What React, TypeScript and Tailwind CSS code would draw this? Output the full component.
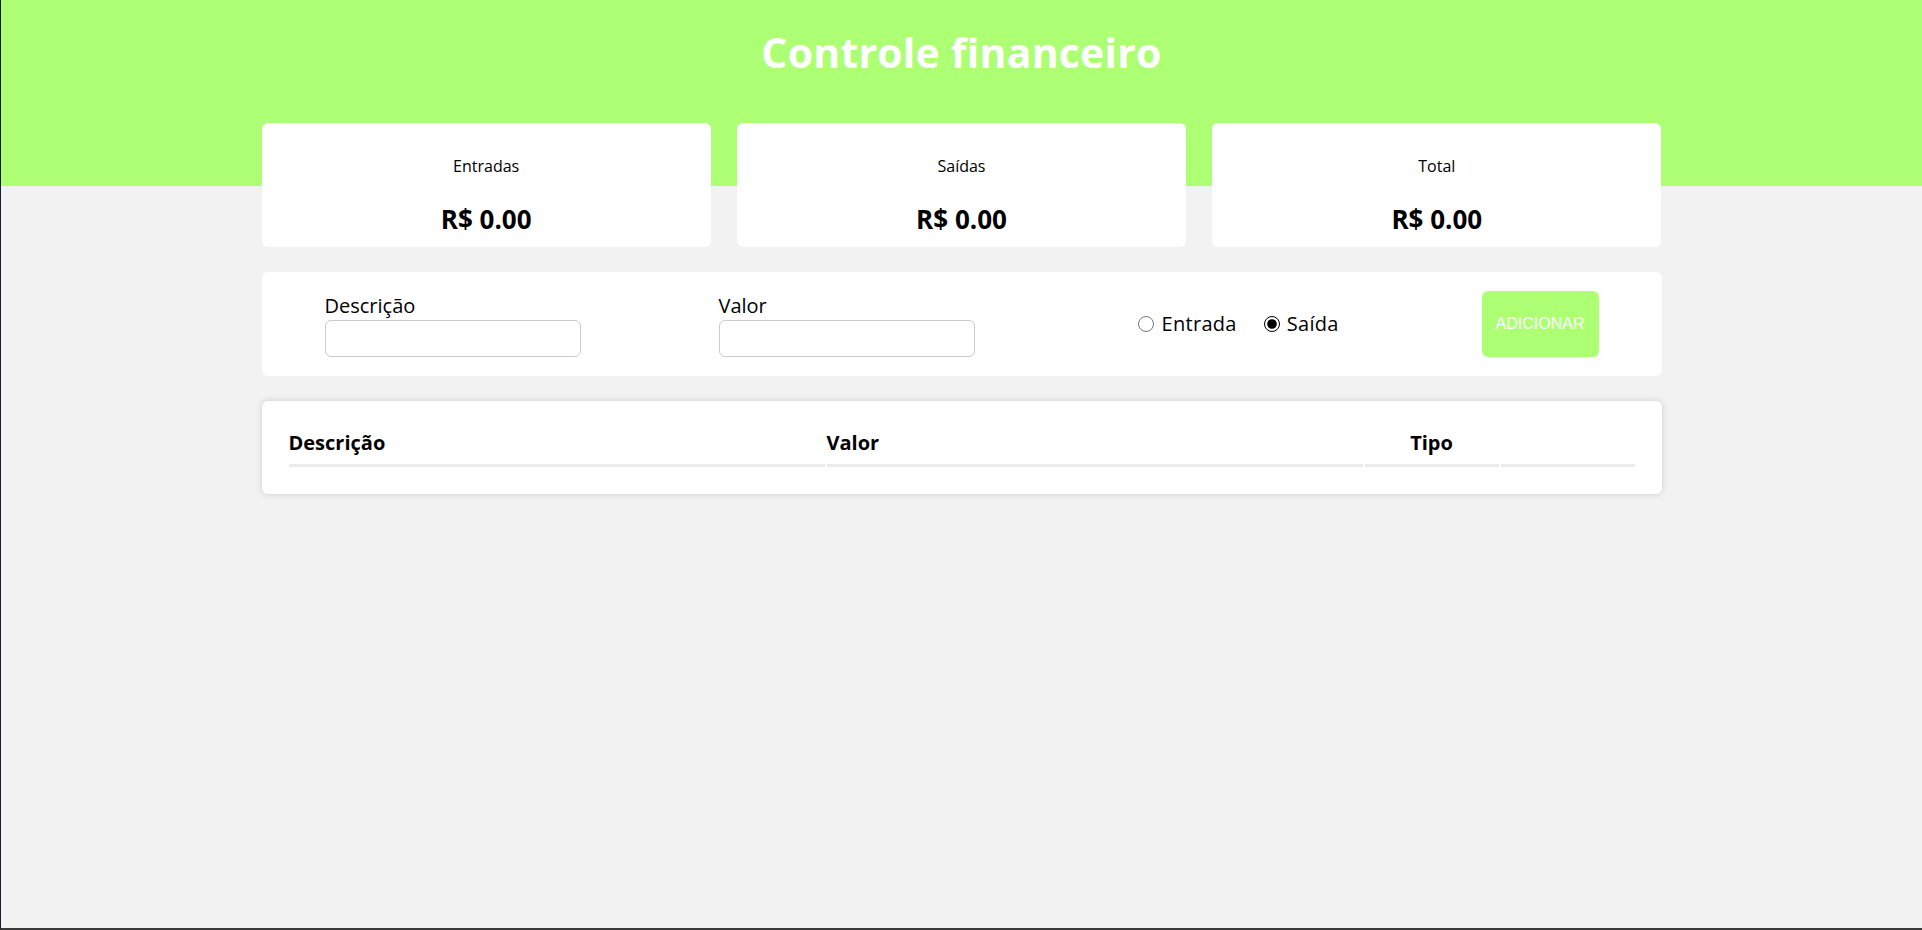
import React from "react";

function SummaryCard({ title, value }: { title: string; value: string }) {
  return (
    <div className="flex h-[124px] flex-1 flex-col items-center rounded-[6px] bg-white pt-[31px]">
      <p className="text-[16px] leading-[24px] text-black">{title}</p>
      <p className="mt-[22px] text-[26px] font-bold leading-[38px] text-black">{value}</p>
    </div>
  );
}

export default function App() {
  return (
    <div className="box-border h-[930px] overflow-hidden border-b-2 border-l border-b-[#3a3a3a] border-l-[#1c1b2b] bg-[#f2f2f2] font-['Open_Sans',sans-serif] text-black">
      <header className="flex h-[186px] justify-center bg-[#adff73]">
        <h1 className="mt-[22px] text-[41px] font-bold leading-[60px] tracking-[0.2px] text-white">Controle financeiro</h1>
      </header>

      <div className="mx-auto -mt-[63px] flex w-[1400px] gap-[26px]">
        <SummaryCard title="Entradas" value="R$ 0.00" />
        <SummaryCard title="Saídas" value="R$ 0.00" />
        <SummaryCard title="Total" value="R$ 0.00" />
      </div>

      <div className="mx-auto mt-[25px] flex h-[104px] w-[1400px] rounded-[6px] bg-white py-[19px] pl-[63px]">
        <div className="flex w-[394px] flex-col">
          <label className="text-[20px] leading-[29px]">Descrição</label>
          <input className="box-border h-[37px] w-[256px] rounded-[6px] border border-[#cccccc] bg-white px-2 outline-none" />
        </div>
        <div className="flex w-[419px] flex-col">
          <label className="text-[20px] leading-[29px]">Valor</label>
          <input className="box-border h-[37px] w-[256px] rounded-[6px] border border-[#cccccc] bg-white px-2 outline-none" />
        </div>
        <div className="flex w-[344px] items-center">
          <input type="radio" name="tipo" id="entrada" className="m-0 h-[16px] w-[16px] accent-black" />
          <label htmlFor="entrada" className="ml-[8px] text-[20px] leading-[30px] tracking-[0.3px]">Entrada</label>
          <input type="radio" name="tipo" id="saida" defaultChecked className="m-0 ml-[27px] h-[16px] w-[16px] accent-black" />
          <label htmlFor="saida" className="ml-[7px] text-[20px] leading-[30px] tracking-[0.3px]">Saída</label>
        </div>
        <button className="w-[117px] rounded-[6px] bg-[#adff73] font-['Liberation_Sans',Arial,sans-serif] text-[16px] text-white">
          ADICIONAR
        </button>
      </div>

      <div className="mx-auto mt-[25px] w-[1400px] rounded-[6px] bg-white p-[25px] shadow-[0_0_6px_#cccccc]">
        <table className="w-full border-separate border-spacing-[2px]">
          <thead>
            <tr>
              <th className="w-[40%] border-b-[3px] border-[#ebebeb] pb-[6px] text-left text-[20px] font-bold leading-[30px]">Descrição</th>
              <th className="w-[40%] border-b-[3px] border-[#ebebeb] pb-[6px] text-left text-[20px] font-bold leading-[30px]">Valor</th>
              <th className="w-[10%] border-b-[3px] border-[#ebebeb] pb-[6px] text-center text-[20px] font-bold leading-[30px]">Tipo</th>
              <th className="w-[10%] border-b-[3px] border-[#ebebeb] pb-[6px]"></th>
            </tr>
          </thead>
          <tbody></tbody>
        </table>
      </div>
    </div>
  );
}
